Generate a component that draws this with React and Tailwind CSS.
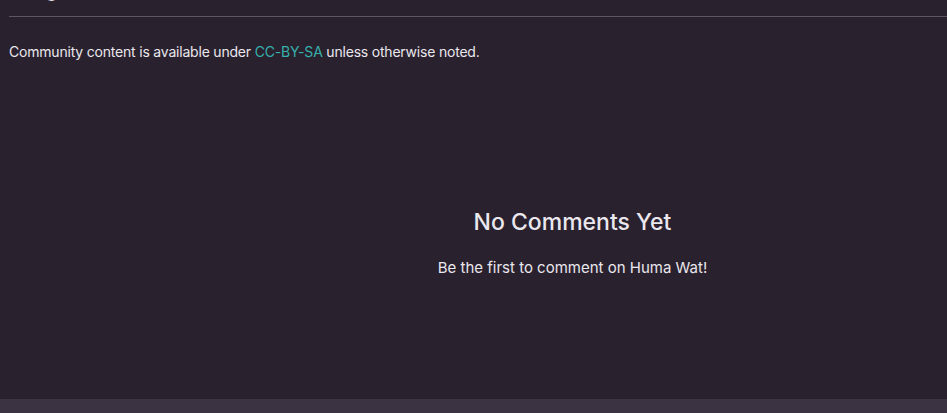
import React from 'react';

const App = () => {
  return (
    <div className="w-[947px] h-[413px] overflow-hidden flex flex-col bg-[#29212d] text-[#eae7ee] font-['Inter','Liberation_Sans',sans-serif]">
      {/* Categories footer of the article */}
      <div className="pl-[9px]">
        <div className="h-[16px] overflow-hidden flex items-end">
          <h2 className="text-[18px] font-bold leading-[22px] mb-[14px] ml-[-4px]">Categories</h2>
        </div>
        <div className="border-t border-[#5d5762]" />
        <p className="mt-[26px] text-[14px] leading-[18px] tracking-[-0.2px]">
          Community content is available under{' '}
          <a href="#" className="text-[#36b0ac]">CC-BY-SA</a> unless otherwise noted.
        </p>
      </div>

      {/* Comments */}
      <div className="flex-1 flex flex-col items-center pl-[198px] pt-[147px]">
        <h3 className="text-[23px] leading-[28px] font-medium">No Comments Yet</h3>
        <p className="mt-[22px] text-[15px] leading-[20px]">Be the first to comment on Huma Wat!</p>
      </div>

      <div className="h-[14px] bg-[#3b3341]" />
    </div>
  );
};

export default App;
